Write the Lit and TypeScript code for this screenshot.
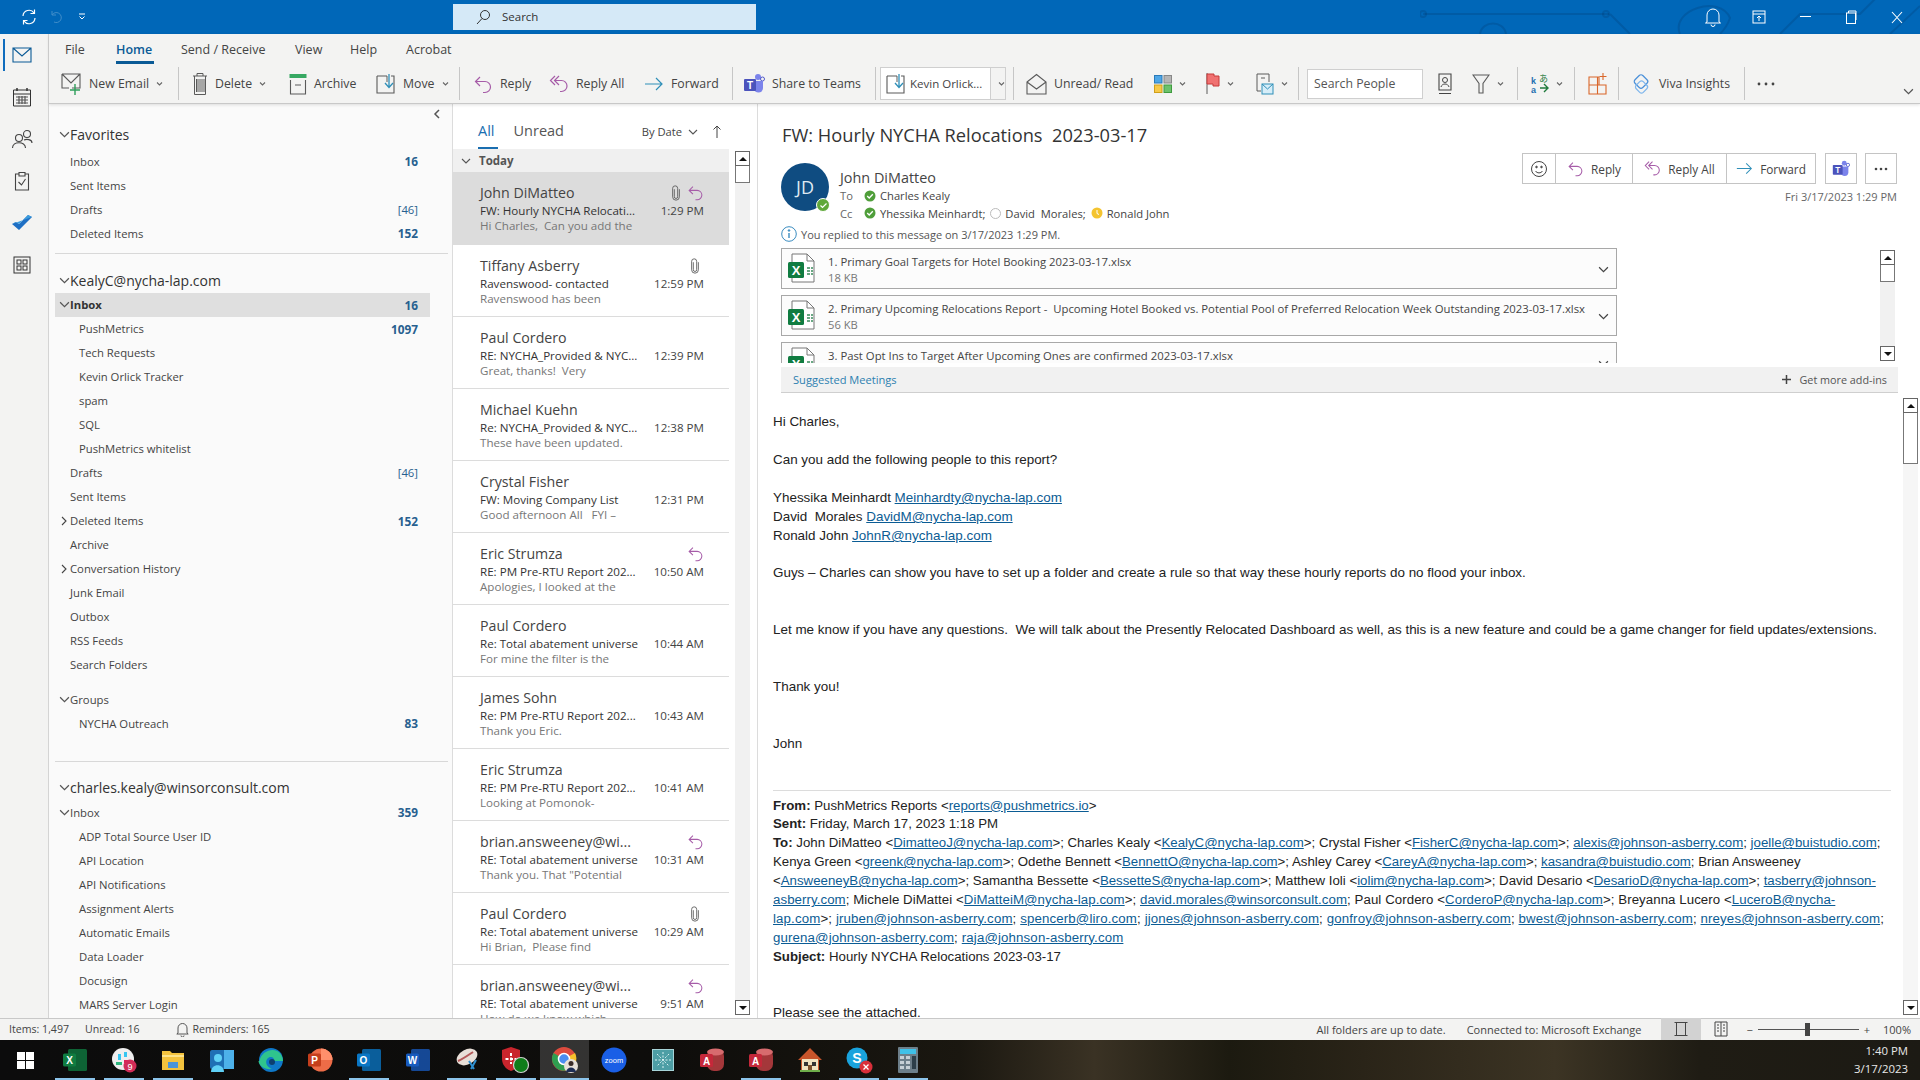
import { LitElement, html, css, svg, TemplateResult } from "lit";
import { customElement } from "lit/decorators.js";

const ic = (w: number, h: number, body: unknown, cls = "") =>
  html`<svg class=${cls} width=${w} height=${h} viewBox="0 0 ${w} ${h}" fill="none">${body}</svg>`;

const G = "#5a5a5a";
const PUR = "#a65ca8";
const TEAL = "#2f8fb8";

const chevD = (c = "#555", s = 10) => html`<svg width=${s} height=${s} viewBox="0 0 10 10" fill="none"><path d="M1 3l4 4 4-4" stroke=${c} stroke-width="1.1"/></svg>`;
const chevR = () => html`<svg width="10" height="10" viewBox="0 0 10 10" fill="none"><path d="M3 1l4 4-4 4" stroke="#444" stroke-width="1.1"/></svg>`;
const caret = () => html`<svg class="caret" width="7" height="6" viewBox="0 0 7 6" fill="none"><path d="M1 1.5l2.5 2.5L6 1.5" stroke="#666" stroke-width="1.1"/></svg>`;

const replyI = (s = 20) => html`<svg width=${s} height=${s} viewBox="0 0 20 20" fill="none"><path d="M7 3L2.5 7.5 7 12M2.5 7.5H12a5.5 5.5 0 0 1 0 11H10" stroke=${PUR} stroke-width="1.2"/></svg>`;
const replyAllI = (s = 20) => html`<svg width=${s} height=${s} viewBox="0 0 20 20" fill="none"><path d="M6 2L1.5 6.5 6 11M10 2L5.5 6.5 10 11M5.5 6.5H12.500a5.500 5.500 0 0 1 0 11H11" stroke=${PUR} stroke-width="1.2"/></svg>`;
const forwardI = (s = 20) => html`<svg width=${s} height=${s} viewBox="0 0 20 20" fill="none"><path d="M1 10h17M12 4l6 6-6 6" stroke=${TEAL} stroke-width="1.2"/></svg>`;
const clipI = () => html`<svg class="clip" width="10" height="16" viewBox="0 0 11 19" fill="none"><path d="M3.500 5v9a2 2 0 0 0 4 0V4A3 3 0 0 0 1.500 4v10a4 4 0 0 0 8 0V5" stroke="#555" stroke-width="1"/></svg>`;
const moveI = ic(20, 22, svg`<path d="M1 3h10M1 3v17h17V3h-3" stroke="${G}" stroke-width="1.1"/><path d="M11 3v6" stroke="${G}"/><path d="M13 1v13M9 10l4 4.500 4-4.500" stroke="${TEAL}" stroke-width="1.300"/>`);
const teamsI = (w = 22, h = 22) => html`<svg width=${w} height=${h} viewBox="0 0 22 22" fill="none"><circle cx="15" cy="4" r="3" fill="#7b83eb"/><circle cx="19.500" cy="6" r="2" stroke="#5059c9"/><path d="M11 8h9v7a4.500 4.500 0 0 1-9 0z" fill="#7b83eb"/><rect x="1" y="6" width="12" height="12" rx="1" fill="#4b53bc"/><text x="7" y="15.500" font-size="10" font-weight="700" fill="#fff" text-anchor="middle" font-family="Liberation Sans">T</text></svg>`;

const icons: Record<string, TemplateResult> = {
  newMail: ic(21, 24, svg`<path d="M1 2h18v14H11M1 2v14h7M1 2l9 9 9-9" stroke="${G}" stroke-width="1.1"/><path d="M14 12v11M9 18h10" stroke="#2e9e5b" stroke-width="1.400"/>`),
  trash: ic(16, 24, svg`<path d="M1 4h14M5 4V1.500h6V4M2.500 4v18.500h11V4M6 7v13M8 7v13M10 7v13M12 7v13M4.500 7v13" stroke="${G}" stroke-width="1"/>`),
  archive: ic(18, 22, svg`<rect x="0.500" y="1" width="17" height="4" fill="#37a862"/><path d="M1.500 7v14h15V7M6 12h6" stroke="${G}" stroke-width="1.100"/>`),
  move: moveI,
  reply: replyI(20),
  replyAll: replyAllI(20),
  forward: forwardI(20),
  teams: teamsI(),
  unread: ic(21, 22, svg`<path d="M1 9l9.500-7.500L20 9v12H1zM1 9l9.500 7L20 9" stroke="${G}" stroke-width="1.100"/>`),
  grid: ic(18, 18, svg`<rect x="0.500" y="0.500" width="7.500" height="7.500" fill="#4ea6e6" stroke="#2a7ab8"/><rect x="10" y="0.500" width="7.500" height="7.500" fill="#b5b5b5" stroke="#888"/><rect x="0.500" y="10" width="7.500" height="7.500" fill="#f7c948" stroke="#cf9f1a"/><rect x="10" y="10" width="7.500" height="7.500" fill="#6cc26c" stroke="#3f9b3f"/>`),
  flag: ic(14, 21, svg`<path d="M1 0v21" stroke="${G}"/><path d="M1 1h7v2h5v10H7v-2H1z" fill="#f07171" stroke="#c63a3a"/>`),
  rules: ic(18, 22, svg`<path d="M1 1h12v8M1 1v17h4" stroke="${G}"/><path d="M5 5h4" stroke="${G}"/><rect x="6" y="11" width="11" height="10" fill="#d6edf8" stroke="${TEAL}"/><path d="M6 11l5.500 5 5.500-5" stroke="${TEAL}"/>`),
  book: ic(14, 22, svg`<path d="M1 1h12v16H1zM1 20.500h12" stroke="#444" stroke-width="1.100"/><circle cx="7" cy="7" r="2.500" stroke="#444"/><path d="M3 14c1-4 7-4 8 0" stroke="#444"/>`),
  filter: ic(18, 20, svg`<path d="M1 1h16l-6 8.500V19H7V9.500z" stroke="${G}" stroke-width="1.100"/>`),
  translate: ic(18, 20, svg`<text x="8" y="8" font-size="9" fill="#1f7a3c" font-family="Noto Sans CJK JP">あ</text><text x="0" y="10" font-size="9" font-weight="700" fill="#1f6fb0" font-family="Liberation Sans">k</text><text x="0" y="19" font-size="9" font-weight="700" fill="#1f6fb0" font-family="Liberation Sans">a</text><path d="M9 14h8M13 10l4 4-4 4" stroke="#1f7a3c" stroke-width="1.400"/>`),
  addin: ic(19, 22, svg`<path d="M1 4h10v8h7v9H1zM1 12h10M9.500 4v17" stroke="#d9662b" stroke-width="1.100"/><path d="M15 0v7M11.500 3.500h7" stroke="#d9662b" stroke-width="1.100"/>`),
  viva: ic(20, 22, svg`<rect x="3.500" y="3" width="11" height="11" rx="2.500" transform="rotate(45 9 8.500)" stroke="#4a90d9" stroke-width="1.200"/><rect x="4.500" y="9" width="10" height="10" rx="2.500" transform="rotate(45 9.500 14)" stroke="#7fb6ec" stroke-width="1.200"/>`),
  dots: ic(20, 6, svg`<circle cx="3" cy="3" r="1.400" fill="#444"/><circle cx="10" cy="3" r="1.400" fill="#444"/><circle cx="17" cy="3" r="1.400" fill="#444"/>`),
};

interface Tb { x: number; k: string; icon?: string; label?: string; caret?: boolean; }
const TOOLBAR: Tb[] = [
  { x: 61, k: "btn", icon: "newMail", label: "New Email", caret: true },
  { x: 178, k: "sep" },
  { x: 192, k: "btn", icon: "trash", label: "Delete", caret: true },
  { x: 289, k: "btn", icon: "archive", label: "Archive" },
  { x: 376, k: "btn", icon: "move", label: "Move", caret: true },
  { x: 459, k: "sep" },
  { x: 473, k: "btn", icon: "reply", label: "Reply" },
  { x: 549, k: "btn", icon: "replyAll", label: "Reply All" },
  { x: 644, k: "btn", icon: "forward", label: "Forward" },
  { x: 732, k: "sep" },
  { x: 743, k: "btn", icon: "teams", label: "Share to Teams" },
  { x: 875, k: "sep" },
  { x: 880, k: "quick" },
  { x: 1013, k: "sep" },
  { x: 1026, k: "btn", icon: "unread", label: "Unread/ Read" },
  { x: 1154, k: "btn", icon: "grid", caret: true },
  { x: 1206, k: "btn", icon: "flag", caret: true },
  { x: 1256, k: "btn", icon: "rules", caret: true },
  { x: 1298, k: "sep" },
  { x: 1307, k: "search" },
  { x: 1438, k: "btn", icon: "book" },
  { x: 1472, k: "btn", icon: "filter", caret: true },
  { x: 1517, k: "sep" },
  { x: 1531, k: "btn", icon: "translate", caret: true },
  { x: 1574, k: "sep" },
  { x: 1588, k: "btn", icon: "addin" },
  { x: 1618, k: "sep" },
  { x: 1632, k: "btn", icon: "viva", label: "Viva Insights" },
  { x: 1744, k: "sep" },
  { x: 1756, k: "btn", icon: "dots" },
];
const TABS = [
  { x: 65, t: "File" }, { x: 116, t: "Home", a: true }, { x: 181, t: "Send / Receive" },
  { x: 295, t: "View" }, { x: 350, t: "Help" }, { x: 406, t: "Acrobat" },
];

type N = { h?: string; t?: string; n?: string; c?: string; sub?: boolean; ch?: string; sel?: boolean; div?: boolean; gap?: boolean };
const NAV: N[] = [
  { h: "Favorites" },
  { t: "Inbox", n: "16" }, { t: "Sent Items" }, { t: "Drafts", c: "[46]" }, { t: "Deleted Items", n: "152" },
  { div: true },
  { h: "KealyC@nycha-lap.com" },
  { t: "Inbox", n: "16", ch: "d", sel: true },
  { t: "PushMetrics", n: "1097", sub: true }, { t: "Tech Requests", sub: true }, { t: "Kevin Orlick Tracker", sub: true },
  { t: "spam", sub: true }, { t: "SQL", sub: true }, { t: "PushMetrics whitelist", sub: true },
  { t: "Drafts", c: "[46]" }, { t: "Sent Items" }, { t: "Deleted Items", n: "152", ch: "r" }, { t: "Archive" },
  { t: "Conversation History", ch: "r" }, { t: "Junk Email" }, { t: "Outbox" }, { t: "RSS Feeds" }, { t: "Search Folders" },
  { t: "Groups", ch: "d", gap: true },
  { t: "NYCHA Outreach", n: "83", sub: true },
  { div: true },
  { h: "charles.kealy@winsorconsult.com" },
  { t: "Inbox", n: "359", ch: "d" },
  { t: "ADP Total Source User ID", sub: true }, { t: "API Location", sub: true }, { t: "API Notifications", sub: true },
  { t: "Assignment Alerts", sub: true }, { t: "Automatic Emails", sub: true }, { t: "Data Loader", sub: true },
  { t: "Docusign", sub: true }, { t: "MARS Server Login", sub: true },
];

const MAILS = [
  ["John DiMatteo", "FW: Hourly NYCHA Relocati...", "Hi Charles,  Can you add the", "1:29 PM", "cr", "sel"],
  ["Tiffany Asberry", "Ravenswood- contacted", "Ravenswood has been", "12:59 PM", "c"],
  ["Paul Cordero", "RE: NYCHA_Provided & NYC...", "Great, thanks!  Very", "12:39 PM", ""],
  ["Michael Kuehn", "Re: NYCHA_Provided & NYC...", "These have been updated.", "12:38 PM", ""],
  ["Crystal Fisher", "FW: Moving Company List", "Good afternoon All   FYI –", "12:31 PM", ""],
  ["Eric Strumza", "RE: PM Pre-RTU Report 202...", "Apologies, I looked at the", "10:50 AM", "r"],
  ["Paul Cordero", "Re: Total abatement universe", "For mine the filter is the", "10:44 AM", ""],
  ["James Sohn", "Re: PM Pre-RTU Report 202...", "Thank you Eric.", "10:43 AM", ""],
  ["Eric Strumza", "RE: PM Pre-RTU Report 202...", "Looking at Pomonok-", "10:41 AM", ""],
  ["brian.answeeney@wi...", "RE: Total abatement universe", "Thank you. That \"Potential", "10:31 AM", "r"],
  ["Paul Cordero", "Re: Total abatement universe", "Hi Brian,  Please find", "10:29 AM", "c"],
  ["brian.answeeney@wi...", "RE: Total abatement universe", "How do we know which", "9:51 AM", "r"],
];

const presence = (c: string) => html`<svg width="12" height="12" viewBox="0 0 12 12"><circle cx="6" cy="6" r="5.500" fill=${c}/><path d="M3.200 6l2 2 3.600-3.800" stroke="#fff" stroke-width="1.300" fill="none"/></svg>`;

const L = (a: string) => html`<a>${a}</a>`;

const tbLetter = (bg: string, fg: string, t: string) => html`<svg width="26" height="26" viewBox="0 0 26 26">${svg`<rect x="6" y="2" width="19" height="22" rx="1.500" fill="${bg}" opacity=".78"/><rect x="1" y="6.500" width="13" height="13" rx="1.500" fill="${bg}"/><text x="7.500" y="17" font-size="10" font-weight="700" text-anchor="middle" fill="${fg}" font-family="Liberation Sans">${t}</text>`}</svg>`;

const accessI = html`<svg width="26" height="26" viewBox="0 0 26 26"><rect x="8" y="2" width="17" height="22" rx="7" fill="#a4373a"/><ellipse cx="16.500" cy="5" rx="8.500" ry="3.500" fill="#d76b6e"/><rect x="1" y="7" width="13" height="13" rx="1.500" fill="#c5283a"/><text x="7.500" y="17.500" font-size="10" font-weight="700" text-anchor="middle" fill="#fff" font-family="Liberation Sans">A</text></svg>`;

const TASK: { i: TemplateResult; bar?: boolean; act?: boolean }[] = [
  { bar: true, i: tbLetter("#107c41", "#fff", "X") },
  { bar: true, i: html`<svg width="26" height="26" viewBox="0 0 26 26"><circle cx="12" cy="12" r="11" fill="#eee"/><path d="M7 7h3v6H7zM13 5h3v5h-3z" fill="#36c5f0"/><path d="M5 15h6v3H5z" fill="#2eb67d"/><path d="M13 13h6v3h-6z" fill="#e01e5a"/><circle cx="19" cy="19" r="6.500" fill="#d12c58"/><text x="19" y="22.500" font-size="9" fill="#fff" text-anchor="middle" font-family="Liberation Sans">9</text></svg>` },
  { bar: true, i: html`<svg width="24" height="24" viewBox="0 0 24 24"><path d="M1 3h8l2 2h12v17H1z" fill="#f2c23e"/><path d="M1 7h22v2H1z" fill="#fbe28a"/><path d="M7 14h10v6H7z" fill="#4a94d8"/></svg>` },
  { i: html`<svg width="26" height="26" viewBox="0 0 26 26"><rect x="1" y="3" width="24" height="19" rx="2" fill="#1f6fb5"/><path d="M15 3h10v19H15z" fill="#4db1ea"/><circle cx="9" cy="11" r="4" fill="#5fd0f6"/><path d="M2 25c0-9 13-9 13 0z" fill="#5fd0f6"/></svg>` },
  { i: html`<svg width="26" height="26" viewBox="0 0 26 26"><circle cx="13" cy="13" r="12" fill="#0f78c8"/><path d="M1.500 14C3 5 13 1 19 4c5 2.500 6 8 6 10h-9c0-3-1-4-3-4-5 0-8 8 1 12-7 1-13-3-13.500-8z" fill="#2fc48d"/><circle cx="14" cy="15" r="3" fill="#0c3f70"/></svg>` },
  { i: html`<svg width="26" height="26" viewBox="0 0 26 26"><circle cx="14" cy="13" r="11.500" fill="#ed6c47"/><path d="M14 1.500a11.500 11.500 0 0 1 11.500 11.500H14z" fill="#ff8f6b"/><rect x="1" y="6.500" width="13" height="13" rx="1.500" fill="#c43e1c"/><text x="7.500" y="17" font-size="10" font-weight="700" text-anchor="middle" fill="#fff" font-family="Liberation Sans">P</text></svg>` },
  { bar: true, i: tbLetter("#0a76c4", "#fff", "O") },
  { i: tbLetter("#185abd", "#fff", "W") },
  { bar: true, i: html`<svg width="26" height="26" viewBox="0 0 26 26"><ellipse cx="13" cy="10" rx="11" ry="7.500" transform="rotate(-28 13 10)" fill="#e8dfd8"/><path d="M4 14c5-2 12-7 15-9" stroke="#b55a5a" stroke-width="2" fill="none"/><path d="M15 14l5 8M22 13l-5 9" stroke="#2f8fd0" stroke-width="2"/></svg>` },
  { bar: true, i: html`<svg width="30" height="28" viewBox="0 0 30 28"><path d="M10 1l9 3v9c0 6-4 10-9 12-5-2-9-6-9-12V4z" fill="#c9252d"/><path d="M10 7v11M4.500 13h11" stroke="#fff" stroke-width="2" stroke-dasharray="3 1.500"/><circle cx="20" cy="19" r="7.500" fill="#0f7d1a" stroke="#cfcfcf" stroke-width="1.200"/></svg>` },
  { bar: true, act: true, i: html`<svg width="28" height="28" viewBox="0 0 28 28"><circle cx="13" cy="13" r="12" fill="#dd4b3e"/><path d="M13 13L24 7A12 12 0 0 1 17 24z" fill="#f6c02c"/><path d="M13 13L17 24A12 12 0 0 1 2.500 7z" fill="#2f9e50"/><circle cx="13" cy="13" r="5.500" fill="#4a8df0" stroke="#fff" stroke-width="1.500"/><circle cx="20" cy="20" r="7" fill="#e7e0d8"/><circle cx="20" cy="17.500" r="2.500" fill="#3a2c28"/><path d="M15 26c1-6 9-6 10 0z" fill="#1f2f55"/></svg>` },
  { i: html`<svg width="26" height="26" viewBox="0 0 26 26"><circle cx="13" cy="13" r="12.500" fill="#1a5fe6"/><text x="13" y="16" font-size="7.500" fill="#fff" text-anchor="middle" font-family="Liberation Sans">zoom</text></svg>` },
  { i: html`<svg width="22" height="22" viewBox="0 0 22 22"><rect x="0.500" y="0.500" width="21" height="21" fill="#4d9ea5" stroke="#a7d4d8"/><path d="M11 3v16M3 11h16M5 5l12 12M17 5L5 17" stroke="#d8f1f3" stroke-width="1" stroke-dasharray="2 1.500"/></svg>` },
  { i: accessI },
  { bar: true, i: accessI },
  { i: html`<svg width="26" height="26" viewBox="0 0 26 26"><path d="M13 1L1 13h3v11h18V13h3z" fill="#c8552b"/><rect x="5" y="12" width="16" height="12" fill="#f0e2c0"/><rect x="7" y="15" width="4" height="4" fill="#333"/><rect x="15" y="15" width="4" height="4" fill="#333"/><rect x="11" y="18" width="4" height="6" fill="#7a4f2c"/><path d="M3 24h20" stroke="#6fae4a" stroke-width="2"/></svg>` },
  { bar: true, i: html`<svg width="28" height="28" viewBox="0 0 28 28"><circle cx="12" cy="12" r="10.500" fill="#19a3dd"/><text x="12" y="17" font-size="14" font-weight="700" text-anchor="middle" fill="#fff" font-family="Liberation Sans">S</text><circle cx="21" cy="21" r="6.500" fill="#d92f3a"/><path d="M18.500 18.500l5 5M23.500 18.500l-5 5" stroke="#fff" stroke-width="1.300"/></svg>` },
  { bar: true, i: html`<svg width="20" height="26" viewBox="0 0 20 26"><rect width="20" height="26" rx="1" fill="#6d7f8a"/><rect x="2" y="2" width="16" height="5" fill="#3fc1e8"/><g fill="#c6d0d6"><rect x="2" y="9" width="4" height="3"/><rect x="8" y="9" width="4" height="3"/><rect x="2" y="14" width="4" height="3"/><rect x="8" y="14" width="4" height="3"/><rect x="2" y="19" width="4" height="3"/><rect x="8" y="19" width="4" height="3"/></g><rect x="14" y="9" width="4" height="13" fill="#2d3f4a"/></svg>` },
];

const scrollbar = (cls = "") => html`<div class="sb ${cls}">
  <div class="sb-btn"><i class="up"></i></div><div class="sb-thumb"></div><div class="sb-track"></div><div class="sb-btn"><i class="down"></i></div>
</div>`;

@customElement("app-root")
export class AppRoot extends LitElement {
  static styles = css`
    :host { display: block; width: 1920px; height: 1080px; overflow: hidden; font-family: "Open Sans", "Liberation Sans", sans-serif; color: #444; background: #fff; }
    * { box-sizing: border-box; }
    .page { display: flex; flex-direction: column; height: 1080px; }
    .title { height: 34px; flex: none; background: #0067b8; position: relative; display: flex; align-items: center; }
    .title svg { flex: none; }
    .t-left { display: flex; align-items: center; width: 453px; padding-left: 20px; gap: 12px; }
    .t-left .undo { opacity: .25; }
    .t-search { width: 303px; height: 26px; background: #d5e9f7; display: flex; align-items: center; padding-left: 22px; gap: 11px; font-size: 11.500px; color: #333; padding-bottom: 1px; }
    .t-right { margin-left: auto; display: flex; align-items: center; margin-right: 0; position: relative; }
    .t-right > span { width: 46px; display: flex; justify-content: center; align-items: center; }
    .circuit { position: absolute; right: 0; top: 0; }
    .mid { flex: 1; display: flex; min-height: 0; }
    .rail { width: 49px; flex: none; background: #f3f3f2; border-right: 1px solid #d4d4d4; position: relative; display: flex; flex-direction: column; align-items: center; }
    .rail .ri { height: 42px; display: flex; align-items: center; justify-content: center; margin-right: 4px; }
    .rail .active { position: absolute; left: 3px; top: 5px; width: 2px; height: 32px; background: #0f6cbd; }
    .right { flex: 1; display: flex; flex-direction: column; min-width: 0; }
    .ribbon { height: 70px; flex: none; background: #f3f3f2; border-bottom: 1px solid #c8c8c8; box-shadow: 0 1px 3px rgba(0,0,0,.12); position: relative; z-index: 2; }
    .tabs { display: flex; height: 29px; align-items: center; padding-top: 1px; font-size: 12.500px; color: #444; }
    .tab { display: block; flex: none; position: relative; white-space: nowrap; }
    .tab.a { color: #0a5a96; font-weight: 600; }
    .tab.a::after { content: ""; position: absolute; left: 0; top: 20px; width: 38px; height: 3px; background: #0a5a96; }
    .tools { display: flex; height: 41px; align-items: center; font-size: 12.300px; color: #444; padding-left: 12px; }
    .cell { flex: none; display: flex; align-items: center; white-space: nowrap; height: 34px; }
    .cell svg { flex: none; }
    .cell .lbl { margin-left: 7px; }
    .caret { margin-left: 7px; }
    .tsep { width: 1px; height: 33px; background: #c6c6c6; }
    .quick { width: 126px; height: 33px; display: flex; border: 1px solid #cfcfcf; background: #fff; font-size: 11.500px; }
    .quick .q-main { width: 114px; display: flex; align-items: center; padding-left: 5px; gap: 4px; border-right: 1px solid #cfcfcf; }
    .quick .q-c { flex: 1; background: #f3f3f2; display: flex; align-items: center; justify-content: center; }
    .psearch { width: 116px; height: 30px; background: #fff; border: 1px solid #cfcfcf; display: flex; align-items: center; padding-left: 6px; font-size: 12.300px; color: #555; }
    .expand { position: absolute; right: 6px; bottom: 1px; }
    .content { flex: 1; display: flex; min-height: 0; }
    .nav { width: 403px; flex: none; background: #fafafa; position: relative; padding-top: 18px; overflow: hidden; }
    .collapse { position: absolute; left: 384px; top: 5px; display: flex; }
    .nh { height: 27px; padding-bottom: 2px; display: flex; align-items: center; font-size: 14px; color: #333; margin-left: 6px; padding-left: 3px; }
    .nh.acct { height: 25px; padding-bottom: 0; }
    .nav .chev { width: 12px; flex: none; display: flex; justify-content: center; }
    .nr { height: 24px; display: flex; align-items: center; font-size: 11.300px; color: #444; margin: 0 22px 0 6px; padding: 0 12px 0 3px; }
    .nr.gap { margin-top: 10.500px; }
    .nr .tx { flex: 1; white-space: nowrap; }
    .nr.sub .tx { padding-left: 9px; }
    .nr.sel { background: #dfdfdf; font-weight: 700; color: #333; }
    .nr .n { font-weight: 700; color: #27608f; font-size: 11.800px; }
    .nr .c { color: #27608f; }
    .ndiv { height: 1px; background: #d8d8d8; margin: 7.500px 4px 14px 6px; }
    .ndiv.second { margin-top: 26px; margin-bottom: 13px; }
    .list { width: 306px; flex: none; background: #fff; display: flex; flex-direction: column; border-left: 1px solid #dcdcdc; border-right: 1px solid #dcdcdc; min-height: 0; position: relative; }
    .lh { height: 45px; flex: none; display: flex; align-items: flex-start; padding: 17px 0 0 25px; font-size: 14.500px; width: 276px; position: relative; }
    .lh .all { color: #1a6eb0; }
    .lh .all::after { content: ""; position: absolute; left: 25px; top: 43px; width: 20px; height: 2px; background: #1a6eb0; }
    .lh .unread { margin-left: 19px; color: #555; }
    .lh .sort { margin-left: auto; display: flex; align-items: center; gap: 6px; font-size: 11.200px; margin-top: 3px; }
    .lh .arrow { margin: 0 7px 0 8px; display: flex; }
    .lb { flex: 1; display: flex; min-height: 0; }
    .lcol { width: 276px; flex: none; overflow: hidden; }
    .today { height: 23px; background: #f0f0f0; display: flex; align-items: center; padding-left: 8px; gap: 8px; font-size: 11.500px; font-weight: 700; color: #555; }
    .mail { height: 72px; padding: 10px 25px 0 27px; border-bottom: 1px solid #dcdcdc; display: grid; grid-template-columns: 1fr auto; grid-template-rows: 21px 15px 15px; white-space: nowrap; }
    .mail.sel { background: #dcdcdc; border-bottom-color: #dcdcdc; height: 73px; }
    .m-n { font-size: 14.200px; color: #444; line-height: 21px; }
    .m-i { display: flex; justify-content: flex-end; gap: 2px; align-items: center; height: 21px; }
    .clip { margin-right: 4px; }
    .m-s { font-size: 11.600px; color: #333; line-height: 15px; }
    .m-t { font-size: 11.600px; color: #444; line-height: 15px; text-align: right; }
    .m-p { font-size: 11.600px; color: #777; line-height: 15px; grid-column: 1 / 3; white-space: pre; }
    .sb { width: 15px; flex: none; display: flex; flex-direction: column; margin: 2px 0 3px 6px; }
    .sb-btn { height: 15px; border: 1px solid #666; background: #fff; display: flex; align-items: center; justify-content: center; flex: none; }
    .sb-btn i { width: 0; height: 0; border-left: 4px solid transparent; border-right: 4px solid transparent; }
    .sb-btn .up { border-bottom: 4px solid #111; }
    .sb-btn .down { border-top: 4px solid #111; }
    .sb-thumb { height: 17px; border: 1px solid #777; border-top: none; background: #fff; flex: none; }
    .sb-track { flex: 1; background: #f1f1f1; }
    .sb.tall .sb-thumb { height: 51px; }
    .sb.tall { margin: 5px 2px 3px 0; }
    .sb.tall .sb-track { background: #f6f6f6; }
    .sb.mini { margin: 7px 0 6px 0; }
    .reader { flex: 1; min-width: 0; background: #fff; display: flex; flex-direction: column; }
    .subject { height: 49px; flex: none; padding: 19px 0 0 24px; font-size: 18.250px; color: #333; line-height: 24px; white-space: pre; }
    .hdr { height: 72px; flex: none; display: flex; padding-left: 24px; padding-right: 23px; }
    .avatar { width: 48px; height: 48px; border-radius: 50%; background: #0f4c81; color: #dfe9f2; font-size: 18px; display: flex; align-items: center; justify-content: center; margin-top: 10px; margin-left: -1px; margin-right: 11px; position: relative; flex: none; }
    .avatar .pr { position: absolute; right: -1px; bottom: -1px; width: 14px; height: 14px; border: 1px solid #fff; border-radius: 50%; background: #5fa83a; display: flex; align-items: center; justify-content: center; }
    .who { padding-top: 15px; white-space: nowrap; }
    .who .nm { font-size: 14.400px; height: 19px; line-height: 20px; color: #444; }
    .who .ln { display: flex; align-items: center; font-size: 11.200px; height: 17.500px; }
    .who .ln .lab { width: 24px; color: #666; }
    .who .ln svg { margin-right: 4px; flex: none; }
    .who .ln .s { margin-right: 5px; white-space: pre; }
    .who .ln .hollow { width: 11px; height: 11px; border: 1px solid #bbb; border-radius: 50%; margin-right: 4px; }
    .actions { margin-left: auto; display: flex; flex-direction: column; align-items: flex-end; }
    .a-row { display: flex; gap: 8.500px; }
    .a-grp { display: flex; height: 31px; border: 1px solid #c4c4c4; background: #fff; font-size: 11.800px; }
    .a-b { display: flex; align-items: center; justify-content: center; gap: 7px; border-left: 1px solid #c4c4c4; }
    .a-b:first-child { border-left: none; }
    .w32 { width: 32px; } .w30 { width: 30px; } .w77 { width: 77px; } .w94 { width: 94px; } .w89 { width: 89px; }
    .date { font-size: 11px; color: #666; margin-top: 6px; line-height: 14px; }
    .notice { height: 18px; flex: none; padding-left: 23px; display: flex; align-items: center; gap: 4px; font-size: 11px; color: #555; white-space: nowrap; }
    .att-wrap { height: 124px; flex: none; display: flex; padding: 0 25px 0 23px; }
    .atts { width: 836px; flex: none; height: 120px; overflow: hidden; padding-top: 5px; display: flex; flex-direction: column; gap: 6px; }
    .att { height: 41px; flex: none; border: 1px solid #a8a8a8; background: #fcfcfc; display: flex; padding-left: 5px; align-items: flex-start; position: relative; }
    .att svg.x { margin-top: 4px; margin-right: 12px; flex: none; }
    .att .an { font-size: 11.320px; color: #444; line-height: 16px; margin-top: 4.500px; white-space: pre; }
    .att .as { font-size: 11.200px; color: #777; line-height: 16px; }
    .att .dn { position: absolute; right: 7px; top: 15px; display: flex; }
    .att-sp { flex: 1; }
    .sug { height: 26px; flex: none; margin: 0 22px 0 23px; background: #f1f1f1; border-bottom: 1px solid #cfcfcf; display: flex; align-items: center; padding: 0 11px 1px 12px; font-size: 11.100px; color: #2c7fb0; }
    .sug .more { margin-left: auto; color: #555; display: flex; gap: 8px; align-items: center; font-size: 10.800px; }
    .bodyrow { flex: 1; display: flex; min-height: 0; }
    .body { flex: 1; min-width: 0; overflow: hidden; padding: 19px 0 0 15px; font-family: "Liberation Sans", Arial, sans-serif; font-size: 13.430px; line-height: 19px; color: #222; }
    .body a { color: #0b5c94; text-decoration: underline; }
    .body p { margin: 0; white-space: pre; }
    .body .m1 { margin-top: 19px; }
    .body .m18 { margin-top: 18px; }
    .body .m2 { margin-top: 38px; }
    .body hr { border: none; height: 1px; background: #dcdcdc; margin: 37px 12px 5.500px 0; }
    .body .hd { font-size: 13.250px; line-height: 18.900px; }
    .body .w1 { letter-spacing: .07px; }
    .body .w2 { letter-spacing: .14px; }
    .body .please { margin-top: 36.500px; }
    .status { height: 22px; flex: none; background: #f3f3f2; border-top: 1px solid #c8c8c8; display: flex; align-items: center; font-size: 10.600px; color: #444; position: relative; white-space: nowrap; padding-bottom: 1px; }
    .st-l { display: flex; align-items: center; padding-left: 9px; }
    .st-l .u { margin-left: 16px; }
    .st-l .rem { margin-left: 36px; display: flex; align-items: center; gap: 4px; }
    .st-r { margin-left: auto; display: flex; align-items: center; height: 100%; font-size: 11px; }
    .st-r .conn { margin-left: 21px; }
    .view-on { width: 40px; height: 22px; background: #d2d2d2; display: flex; align-items: center; justify-content: center; margin-left: 20px; }
    .view-off { width: 39px; display: flex; justify-content: center; }
    .minus { margin-left: 6px; }
    .pct { margin: 0 9px 0 13px; }
    .slider { width: 101px; height: 1px; background: #555; position: relative; margin: 0 5px; }
    .slider i { position: absolute; left: 47px; top: -6px; width: 5px; height: 13px; background: #444; }
    .taskbar { height: 40px; flex: none; background: linear-gradient(90deg, #0c0c0c 0, #0e0d0b 35%, #1a1710 50%, #3a3224 57%, #1c1a10 64%, #2a2418 71%, #3c3424 81%, #1f1c14 88.500%, #1c1a14 100%); display: flex; color: #e8e8e8; position: relative; }
    .win { width: 50px; display: flex; align-items: center; justify-content: center; }
    .slot { width: 49px; flex: none; display: flex; align-items: center; justify-content: center; position: relative; }
    .slot.act { background: rgba(255,255,255,.16); }
    .slot.bar::after { content: ""; position: absolute; left: 5px; right: 4px; bottom: 0; height: 2px; background: #8cc4ea; }
    .slot.act::after { left: 0; right: 0; }
    .clock { margin-left: auto; padding: 2px 12px 0 0; text-align: right; font-size: 11.400px; line-height: 18px; color: #e8e8e8; }
  `;

  private cellEl(t: Tb, i: number) {
    const next = TOOLBAR[i + 1] ? TOOLBAR[i + 1].x : 1872;
    const w = next - t.x;
    if (t.k === "sep") return html`<div class="cell" style="width:${w}px"><div class="tsep"></div></div>`;
    if (t.k === "quick") return html`<div class="cell" style="width:${w}px"><div class="quick"><div class="q-main">${moveI}<span>Kevin Orlick...</span></div><div class="q-c">${caret()}</div></div></div>`;
    if (t.k === "search") return html`<div class="cell" style="width:${w}px"><div class="psearch">Search People</div></div>`;
    return html`<div class="cell" style="width:${w}px">${icons[t.icon!]}${t.label ? html`<span class="lbl">${t.label}</span>` : ""}${t.caret ? caret() : ""}</div>`;
  }

  private navEl(n: N, i: number) {
    if (n.div) return html`<div class="ndiv ${i > 20 ? "second" : ""}"></div>`;
    if (n.h) return html`<div class="nh ${n.h.includes("@") ? "acct" : ""}"><span class="chev">${chevD("#555", 11)}</span><span>${n.h}</span></div>`;
    return html`<div class="nr ${n.sub ? "sub" : ""} ${n.sel ? "sel" : ""} ${n.gap ? "gap" : ""}">
      <span class="chev">${n.ch === "d" ? chevD("#555", 11) : n.ch === "r" ? chevR() : ""}</span>
      <span class="tx">${n.t}</span>${n.n ? html`<span class="n">${n.n}</span>` : ""}${n.c ? html`<span class="c">${n.c}</span>` : ""}</div>`;
  }

  private mailEl(m: string[]) {
    return html`<div class="mail ${m[5] === "sel" ? "sel" : ""}">
      <div class="m-n">${m[0]}</div>
      <div class="m-i">${m[4].includes("c") ? clipI() : ""}${m[4].includes("r") ? replyI(17) : ""}</div>
      <div class="m-s">${m[1]}</div><div class="m-t">${m[3]}</div>
      <div class="m-p">${m[2]}</div>
    </div>`;
  }

  private xl() {
    return html`<svg class="x" width="29" height="30" viewBox="0 0 29 30" fill="none"><path d="M5 1h15l7 7v21H5z" fill="#fff" stroke="#777"/><path d="M20 1v7h7" stroke="#777"/><g fill="#6aa884"><rect x="20" y="14" width="3" height="2"/><rect x="24" y="14" width="2" height="2"/><rect x="20" y="17" width="3" height="2"/><rect x="24" y="17" width="2" height="2"/><rect x="20" y="20" width="3" height="2"/><rect x="24" y="20" width="2" height="2"/></g><rect x="1" y="9" width="16" height="16" rx="1.500" fill="#107c41"/><text x="9" y="22" text-anchor="middle" font-size="13" font-weight="700" fill="#fff" font-family="Liberation Sans">X</text></svg>`;
  }

  render() {
    return html`<div class="page">
      <div class="title">
        <svg class="circuit" width="500" height="34" viewBox="0 0 500 34" fill="none" stroke="rgba(0,30,70,.16)" stroke-width="2"><path d="M3 14h186M190 14l20 20M60 34c2-14 24-14 26 0M260 34c-10-24 40-40 50-16-2 6-6 12-10 16M360 34l20-20h60l20-20M470 34L500 6"/><circle cx="3" cy="14" r="3"/><circle cx="186" cy="14" r="3"/></svg>
        <div class="t-left">
          <svg width="18" height="18" viewBox="0 0 18 18" fill="none" stroke="#fff" stroke-width="1.200"><path d="M3 8a6 6 0 0 1 11-3M15 10a6 6 0 0 1-11 3M14.500 1.500V5.500h-4M3.500 16.500V12.500h4"/></svg>
          <svg class="undo" width="16" height="16" viewBox="0 0 16 16" fill="none" stroke="#fff"><path d="M2 6a5 5 0 1 1 2 7M2 2v4h4"/></svg>
          <svg width="8" height="8" viewBox="0 0 8 8" fill="none" stroke="#fff"><path d="M1 1h6M1.500 3.500L4 6l2.500-2.500"/></svg>
        </div>
        <div class="t-search">
          <svg width="16" height="16" viewBox="0 0 16 16" fill="none" stroke="#333"><circle cx="10" cy="6" r="4.500"/><path d="M7 9.500L2 15"/></svg>
          <span>Search</span>
        </div>
        <div class="t-right">
          <span><svg width="16" height="20" viewBox="0 0 16 20" fill="none" stroke="#fff"><path d="M2 15V8a6 6 0 0 1 12 0v7l1.500 1h-15zM6 17.500a2 2 0 0 0 4 0"/></svg></span>
          <span><svg width="14" height="14" viewBox="0 0 14 14" fill="none" stroke="#fff"><rect x="1" y="1" width="12" height="12"/><path d="M1 4h12M7 11V6M5 8l2-2 2 2"/></svg></span>
          <span><svg width="11" height="2" viewBox="0 0 11 2"><rect width="11" height="1" fill="#fff"/></svg></span>
          <span><svg width="12" height="14" viewBox="0 0 12 14" fill="none" stroke="#fff"><rect x="1.500" y="3" width="9" height="10.500"/><path d="M3.500 3V1h7.500v9"/></svg></span>
          <span><svg width="12" height="13" viewBox="0 0 12 13" fill="none" stroke="#fff" stroke-width="1.100"><path d="M1 1l10 11M11 1L1 12"/></svg></span>
        </div>
      </div>
      <div class="mid">
        <div class="rail">
          <div class="active"></div>
          <div class="ri"><svg width="20" height="16" viewBox="0 0 20 16" fill="none" stroke="#0a5a96" stroke-width="1.100"><path d="M1 1h18v14H1zM1 1l9 8 9-8"/></svg></div>
          <div class="ri"><svg width="20" height="20" viewBox="0 0 20 20" fill="none" stroke="#333"><path d="M1.500 3h17v16h-17zM1.500 7h17"/><path d="M5 1v3M15 1v3" stroke-width="1.500"/><path d="M4 10h12M4 13h12M4 16h12M7 9v8M10 9v8M13 9v8" stroke="#555" stroke-width="1.200"/></svg></div>
          <div class="ri"><svg width="22" height="20" viewBox="0 0 22 20" fill="none" stroke="#444" stroke-width="1.100"><circle cx="8" cy="9" r="3.500"/><path d="M1.500 19c0-7 13-7 13 0"/><circle cx="16" cy="5" r="3.500"/><path d="M13 11c2-1 8-1 8 3"/></svg></div>
          <div class="ri"><svg width="16" height="20" viewBox="0 0 16 20" fill="none" stroke="#444" stroke-width="1.100"><path d="M5 3H1.500v16h13V3H11M5 1.500h6V5H5zM4.500 11l3 3 4-6"/></svg></div>
          <div class="ri"><svg width="22" height="18" viewBox="0 0 22 18"><path d="M1 10l7 6L21 3l-4-2-9 9-3-2z" fill="#1e6fc4"/><path d="M1 10l4-2 3 2 9-9 4 2" fill="#3a9bdc"/></svg></div>
          <div class="ri"><svg width="18" height="18" viewBox="0 0 18 18" fill="none" stroke="#333"><rect x="1" y="1" width="16" height="16"/><rect x="4" y="4" width="4" height="4"/><rect x="10" y="4" width="4" height="4"/><rect x="4" y="10" width="4" height="4"/><rect x="10" y="10" width="4" height="4"/></svg></div>
        </div>
        <div class="right">
          <div class="ribbon">
            <div class="tabs">
              ${TABS.map((t, i) => html`<span class="tab ${t.a ? "a" : ""}" style="width:${(TABS[i + 1] ? TABS[i + 1].x : 470) - t.x}px;${i === 0 ? "margin-left:16px" : ""}">${t.t}</span>`)}
            </div>
            <div class="tools">
              ${TOOLBAR.map((t, i) => this.cellEl(t, i))}
            </div>
            <div class="expand">${chevD("#555", 11)}</div>
          </div>
          <div class="content">
            <div class="nav">
              <div class="collapse"><svg width="8" height="10" viewBox="0 0 8 10" fill="none"><path d="M6 1L2 5l4 4" stroke="#555" stroke-width="1.500"/></svg></div>
              ${NAV.map((n, i) => this.navEl(n, i))}
            </div>
            <div class="list">
              <div class="lh">
                <span class="all">All</span><span class="unread">Unread</span>
                <span class="sort">By Date ${chevD("#555", 10)}<span class="arrow"><svg width="10" height="14" viewBox="0 0 10 14" fill="none" stroke="#444"><path d="M5 13V1M1.500 4.500L5 1l3.500 3.500"/></svg></span></span>
              </div>
              <div class="lb">
                <div class="lcol">
                  <div class="today">${chevD("#555", 10)}<span>Today</span></div>
                  ${MAILS.map((m) => this.mailEl(m))}
                </div>
                ${scrollbar()}
              </div>
            </div>
            <div class="reader">
              <div class="subject">FW: Hourly NYCHA Relocations  2023-03-17</div>
              <div class="hdr">
                <div class="avatar">JD<span class="pr"><svg width="9" height="9" viewBox="0 0 9 9" fill="none"><path d="M1.500 4.500l2 2 4-4" stroke="#fff" stroke-width="1.200"/></svg></span></div>
                <div class="who">
                  <div class="nm">John DiMatteo</div>
                  <div class="ln"><span class="lab">To</span>${presence("#4f9e3a")}<span class="s">Charles Kealy</span></div>
                  <div class="ln"><span class="lab">Cc</span>${presence("#4f9e3a")}<span class="s">Yhessika Meinhardt;</span><span class="hollow"></span><span class="s">David  Morales;</span><svg width="12" height="12" viewBox="0 0 12 12"><circle cx="6" cy="6" r="5.500" fill="#f4c430"/><path d="M6 3v3.500l2 1" stroke="#fff" fill="none"/></svg><span class="s">Ronald John</span></div>
                </div>
                <div class="actions">
                  <div class="a-row">
                    <div class="a-grp">
                      <div class="a-b w32"><svg width="18" height="18" viewBox="0 0 18 18" fill="none" stroke="#444"><circle cx="9" cy="9" r="7.500"/><circle cx="6.500" cy="7" r=".8" fill="#444"/><circle cx="11.500" cy="7" r=".8" fill="#444"/><path d="M5.500 11c1.500 2.500 5.500 2.500 7 0"/></svg></div>
                      <div class="a-b w77">${replyI(17)}<span>Reply</span></div>
                      <div class="a-b w94">${replyAllI(17)}<span>Reply All</span></div>
                      <div class="a-b w89">${forwardI(17)}<span>Forward</span></div>
                    </div>
                    <div class="a-grp"><div class="a-b w30">${teamsI(18, 18)}</div></div>
                    <div class="a-grp"><div class="a-b w30"><svg width="14" height="4" viewBox="0 0 14 4"><circle cx="2" cy="2" r="1.300" fill="#444"/><circle cx="7" cy="2" r="1.300" fill="#444"/><circle cx="12" cy="2" r="1.300" fill="#444"/></svg></div></div>
                  </div>
                  <div class="date">Fri 3/17/2023 1:29 PM</div>
                </div>
              </div>
              <div class="notice"><svg width="16" height="16" viewBox="0 0 16 16" fill="none" stroke="#3a8cc0"><circle cx="8" cy="8" r="7.300"/><path d="M8 7v5" stroke-width="1.400"/><circle cx="8" cy="4.500" r=".8" fill="#3a8cc0"/></svg><span>You replied to this message on 3/17/2023 1:29 PM.</span></div>
              <div class="att-wrap">
                <div class="atts">
                  <div class="att">${this.xl()}<div><div class="an">1. Primary Goal Targets for Hotel Booking 2023-03-17.xlsx</div><div class="as">18 KB</div></div><span class="dn">${chevD("#444", 11)}</span></div>
                  <div class="att">${this.xl()}<div><div class="an">2. Primary Upcoming Relocations Report -  Upcoming Hotel Booked vs. Potential Pool of Preferred Relocation Week Outstanding 2023-03-17.xlsx</div><div class="as">56 KB</div></div><span class="dn">${chevD("#444", 11)}</span></div>
                  <div class="att">${this.xl()}<div><div class="an">3. Past Opt Ins to Target After Upcoming Ones are confirmed 2023-03-17.xlsx</div></div><span class="dn">${chevD("#444", 11)}</span></div>
                </div>
                <div class="att-sp"></div>
                ${scrollbar("mini")}
              </div>
              <div class="sug"><span>Suggested Meetings</span><span class="more"><svg width="9" height="9" viewBox="0 0 9 9"><path d="M4.500 0v9M0 4.500h9" stroke="#444" stroke-width="1.500"/></svg>Get more add-ins</span></div>
              <div class="bodyrow">
                <div class="body">
                  <p>Hi Charles,</p>
                  <p class="m1">Can you add the following people to this report?</p>
                  <p class="m1">Yhessika Meinhardt ${L("Meinhardty@nycha-lap.com")}</p>
                  <p>David  Morales ${L("DavidM@nycha-lap.com")}</p>
                  <p>Ronald John ${L("JohnR@nycha-lap.com")}</p>
                  <p class="m18">Guys – Charles can show you have to set up a folder and create a rule so that way these hourly reports do no flood your inbox.</p>
                  <p class="m2">Let me know if you have any questions.  We will talk about the Presently Relocated Dashboard as well, as this is a new feature and could be a game changer for field updates/extensions.</p>
                  <p class="m2">Thank you!</p>
                  <p class="m2">John</p>
                  <hr />
                  <div class="hd">
                    <p><b>From:</b> PushMetrics Reports &lt;${L("reports@pushmetrics.io")}&gt;</p>
                    <p><b>Sent:</b> Friday, March 17, 2023 1:18 PM</p>
                    <p><b>To:</b> John DiMatteo &lt;${L("DimatteoJ@nycha-lap.com")}&gt;; Charles Kealy &lt;${L("KealyC@nycha-lap.com")}&gt;; Crystal Fisher &lt;${L("FisherC@nycha-lap.com")}&gt;; ${L("alexis@johnson-asberry.com")}; ${L("joelle@buistudio.com")};</p>
                    <p>Kenya Green &lt;${L("greenk@nycha-lap.com")}&gt;; Odethe Bennett &lt;${L("BennettO@nycha-lap.com")}&gt;; Ashley Carey &lt;${L("CareyA@nycha-lap.com")}&gt;; ${L("kasandra@buistudio.com")}; Brian Answeeney</p>
                    <p>&lt;${L("AnsweeneyB@nycha-lap.com")}&gt;; Samantha Bessette &lt;${L("BessetteS@nycha-lap.com")}&gt;; Matthew Ioli &lt;${L("iolim@nycha-lap.com")}&gt;; David Desario &lt;${L("DesarioD@nycha-lap.com")}&gt;; ${L("tasberry@johnson-")}</p>
                    <p class="w1">${L("asberry.com")}; Michele DiMattei &lt;${L("DiMatteiM@nycha-lap.com")}&gt;; ${L("david.morales@winsorconsult.com")}; Paul Cordero &lt;${L("CorderoP@nycha-lap.com")}&gt;; Breyanna Lucero &lt;${L("LuceroB@nycha-")}</p>
                    <p class="w2">${L("lap.com")}&gt;; ${L("jruben@johnson-asberry.com")}; ${L("spencerb@liro.com")}; ${L("jjones@johnson-asberry.com")}; ${L("gonfroy@johnson-asberry.com")}; ${L("bwest@johnson-asberry.com")}; ${L("nreyes@johnson-asberry.com")};</p>
                    <p class="w2">${L("gurena@johnson-asberry.com")}; ${L("raja@johnson-asberry.com")}</p>
                    <p><b>Subject:</b> Hourly NYCHA Relocations 2023-03-17</p>
                  </div>
                  <p class="please">Please see the attached.</p>
                </div>
                ${scrollbar("tall")}
              </div>
            </div>
          </div>
        </div>
      </div>
      <div class="status">
        <div class="st-l">
          <span>Items: 1,497</span><span class="u">Unread: 16</span>
          <span class="rem"><svg width="13" height="15" viewBox="0 0 13 15" fill="none" stroke="#555"><path d="M2 11V6a4.500 4.500 0 0 1 9 0v5l1.200 1H.8zM5 13.500a1.500 1.500 0 0 0 3 0"/></svg>Reminders: 165</span>
        </div>
        <div class="st-r">
          <span>All folders are up to date.</span><span class="conn">Connected to: Microsoft Exchange</span>
          <span class="view-on"><svg width="14" height="16" viewBox="0 0 14 16" fill="none" stroke="#444"><path d="M.5 1.500h13M.5 14.500h13M2.500 1.500v13M11.500 1.500v13"/></svg></span>
          <span class="view-off"><svg width="14" height="16" viewBox="0 0 14 16" fill="none" stroke="#444"><path d="M1 1h12v14H1zM7 1v14M3 4h2M3 7h2M3 10h2M9 4h2M9 7h2M9 10h2"/></svg></span>
          <span class="minus">−</span><div class="slider"><i></i></div><span>+</span>
          <span class="pct">100%</span>
        </div>
      </div>
      <div class="taskbar">
        <div class="win"><svg width="17" height="17" viewBox="0 0 17 17" fill="#fff"><rect width="8" height="8"/><rect x="9" width="8" height="8"/><rect y="9" width="8" height="8"/><rect x="9" y="9" width="8" height="8"/></svg></div>
        ${TASK.map((t) => html`<div class="slot ${t.bar ? "bar" : ""} ${t.act ? "act" : ""}">${t.i}</div>`)}
        <div class="clock"><div>1:40 PM</div><div>3/17/2023</div></div>
      </div>
    </div>`;
  }
}
